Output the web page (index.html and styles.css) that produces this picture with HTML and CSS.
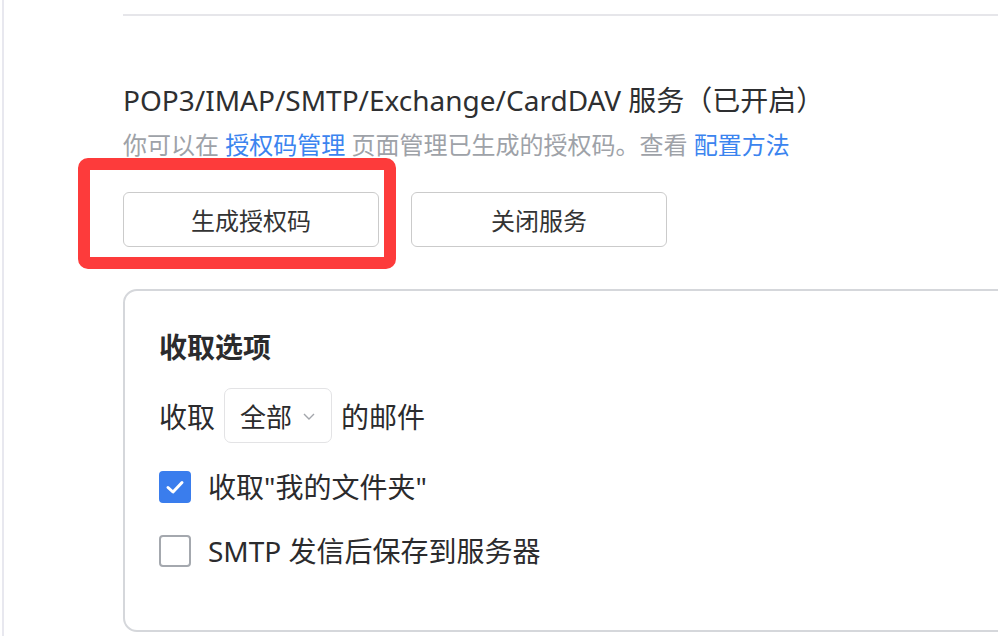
FILE: index.html
```html
<!DOCTYPE html>
<html lang="zh-CN">
<head>
    <meta charset="UTF-8">
    <meta name="viewport" content="width=device-width, initial-scale=1.0">
    <title>POP3/IMAP/SMTP 服务</title>
    <link rel="stylesheet" href="styles.css">
</head>
<body>
    <div class="page">
        <div class="content">
            <div class="divider"></div>

            <div class="service">
                <h2 class="service-title">POP3/IMAP/SMTP/Exchange/CardDAV 服务（已开启）</h2>
                <p class="service-tip">你可以在 <a href="#">授权码管理</a> 页面管理已生成的授权码。查看 <a href="#">配置方法</a></p>

                <div class="service-actions">
                    <div class="highlight-wrap">
                        <button type="button" class="btn">生成授权码</button>
                        <span class="highlight"></span>
                    </div>
                    <button type="button" class="btn">关闭服务</button>
                </div>
            </div>

            <div class="options">
                <h3 class="options-title">收取选项</h3>
                <div class="options-row">
                    <span>收取</span>
                    <div class="select">
                        <span>全部</span>
                        <svg class="chevron" width="14" height="9" viewBox="0 0 14 9"><path d="M2 2 L7 7 L12 2" fill="none" stroke="#a3a6ab" stroke-width="1.4"/></svg>
                    </div>
                    <span>的邮件</span>
                </div>
                <label class="check">
                    <span class="box checked">
                        <svg width="20" height="16" viewBox="0 0 20 16"><path d="M3 8.5 L8 13 L17 3.5" fill="none" stroke="#fff" stroke-width="3" stroke-linecap="round" stroke-linejoin="round"/></svg>
                    </span>
                    <span>收取"我的文件夹"</span>
                </label>
                <label class="check">
                    <span class="box"></span>
                    <span>SMTP 发信后保存到服务器</span>
                </label>
            </div>
        </div>
    </div>
</body>
</html>
```

FILE: styles.css
```css
* {
    box-sizing: border-box;
}
html, body {
    margin: 0;
    padding: 0;
    background-color: #fff;
    overflow: hidden;
}
body {
    font-family: "Noto Sans", "Noto Sans CJK SC", sans-serif;
    color: #2b2b2d;
}
.page {
    margin-left: 2px;
    border-left: 2px solid #e8e8ef;
    height: 100vh;
}
.content {
    padding-left: 119px;
    padding-top: 14px;
}
.divider {
    height: 2px;
    background-color: #e6e6ea;
}

.service {
    padding-top: 65px;
}
.service-title {
    margin: 0;
    font-size: 28px;
    font-weight: normal;
    line-height: 38px;
    color: #2e2f31;
}
.service-tip {
    margin: 10px 0 0 0;
    font-size: 24px;
    line-height: 32px;
    color: #9ea2a8;
}
.service-tip a {
    color: #3b84ef;
    text-decoration: none;
}
.service-actions {
    display: flex;
    gap: 32px;
    margin-top: 31px;
}
.highlight-wrap {
    position: relative;
}
.btn {
    width: 256px;
    height: 55px;
    background-color: #fff;
    border: 1.5px solid #cbcbcb;
    border-radius: 6px;
    font-family: inherit;
    font-size: 24px;
    color: #333;
    cursor: pointer;
}
.highlight {
    position: absolute;
    left: -45px;
    top: -34px;
    width: 318px;
    height: 111px;
    border: 12px solid #fd3b3b;
    border-radius: 10px;
    pointer-events: none;
}

.options {
    margin-top: 42px;
    width: 1000px;
    height: 343px;
    border: 2px solid #d5d7db;
    border-radius: 14px;
    padding: 38px 0 0 34px;
}
.options-title {
    margin: 0;
    font-size: 28px;
    font-weight: bold;
    line-height: 36px;
    color: #2b2b2d;
}
.options-row {
    display: flex;
    align-items: center;
    gap: 9px;
    margin-top: 23px;
    font-size: 28px;
}
.select {
    display: flex;
    align-items: center;
    gap: 10px;
    height: 55px;
    padding: 0 15px 0 15px;
    border: 1.5px solid #e3e3e5;
    border-radius: 7px;
    font-size: 26px;
}
.chevron {
    margin-top: 2px;
}
.check {
    display: flex;
    align-items: center;
    gap: 17px;
    margin-top: 26px;
    font-size: 28px;
    line-height: 36px;
}
.check + .check {
    margin-top: 28px;
}
.box {
    width: 32px;
    height: 32px;
    border: 2px solid #a4a8ae;
    border-radius: 4px;
    display: flex;
    align-items: center;
    justify-content: center;
}
.box.checked {
    background-color: #3a7ded;
    border-color: #3a7ded;
}
```
